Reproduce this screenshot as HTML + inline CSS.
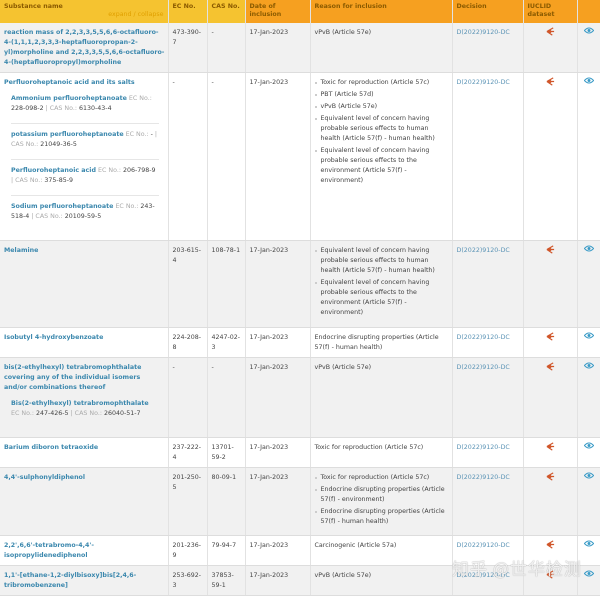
<!DOCTYPE html>
<html><head><meta charset="utf-8"><style>
*{margin:0;padding:0;box-sizing:border-box}
body{width:600px;height:591px;overflow:hidden;background:#fff;font-family:"DejaVu Sans","Liberation Sans",sans-serif;font-size:6.3px;color:#444;position:relative}
table{border-collapse:collapse;width:600px;table-layout:fixed;position:absolute;top:0;left:0}
td,th{vertical-align:top;border-right:1px solid #e2e2e2;padding:5px 3px 0 4px;line-height:10px;overflow:hidden}
th{height:23px;text-align:left;font-weight:bold;color:#8a5a00;padding:3px 4px 0;line-height:8px;background:#f5c330}
th.o{background:#f6a020}
tr.g td{background:#f1f1f1}
tr td{border-bottom:1px solid #ddd}
.l{color:#3a87ad;font-weight:bold}
.d{color:#5a93b5}
.sub{margin:6px 6px 0 7px;padding-bottom:6px;border-bottom:1px solid #e6e6e6;height:30px}
.lab{color:#aaa}
ul{list-style:none}
li{padding-left:6px;position:relative;margin-bottom:2px}
li:before{content:"";position:absolute;left:0;top:4px;width:2px;height:2px;background:#ccc}
.ic,.eye{text-align:center;padding-top:4px}
.wm{position:absolute;left:452px;top:555px;font-family:"Noto Sans CJK SC",sans-serif;font-size:17px;color:rgba(255,255,255,.85);text-shadow:0 0 1px #888;letter-spacing:1px}
</style></head><body>
<svg width="0" height="0" style="position:absolute"><defs>
<symbol id="iu" viewBox="0 0 10 10"><path d="M1 5L8 1M1 5L9 5M1 5L7 9" stroke="#d0562a" stroke-width="1.3" fill="none"/><circle cx="4" cy="5" r="2" fill="#d0562a"/></symbol>
<symbol id="ey" viewBox="0 0 12 8"><path d="M0.5 4Q6 -2 11.5 4Q6 10 0.5 4Z" fill="none" stroke="#3a9bc7" stroke-width="1.2"/><circle cx="6" cy="4" r="1.8" fill="#3a9bc7"/></symbol>
</defs></svg>
<table>
<colgroup><col style="width:168px"><col style="width:39px"><col style="width:38px"><col style="width:65px"><col style="width:142px"><col style="width:71px"><col style="width:54px"><col style="width:23px"></colgroup>
<tr><th>Substance name<br><span style="float:right;color:#e0a000;font-weight:normal;">expand / collapse</span></th><th>EC No.</th><th>CAS No.</th><th class="o">Date of inclusion</th><th class="o">Reason for inclusion</th><th class="o">Decision</th><th class="o">IUCLID dataset</th><th class="o"></th></tr>
<tr class="g" style="height:49px"><td><span class="l">reaction mass of 2,2,3,3,5,5,6,6-octafluoro-4-(1,1,1,2,3,3,3-heptafluoropropan-2-yl)morpholine and 2,2,3,3,5,5,6,6-octafluoro-4-(heptafluoropropyl)morpholine</span></td><td>473-390-7</td><td>-</td><td>17-Jan-2023</td><td>vPvB (Article 57e)</td><td class="d">D(2022)9120-DC</td><td class="ic"><svg width="9" height="9"><use href="#iu"/></svg></td><td class="eye"><svg width="10" height="7"><use href="#ey"/></svg></td></tr>
<tr style="height:168px"><td><span class="l">Perfluoroheptanoic acid and its salts</span>
<div class="sub"><span class="l">Ammonium perfluoroheptanoate</span> <span class="lab">EC No.:</span> 228-098-2 <span class="lab">| CAS No.:</span> 6130-43-4</div>
<div class="sub"><span class="l">potassium perfluoroheptanoate</span> <span class="lab">EC No.:</span> - <span class="lab">| CAS No.:</span> 21049-36-5</div>
<div class="sub"><span class="l">Perfluoroheptanoic acid</span> <span class="lab">EC No.:</span> 206-798-9 <span class="lab">| CAS No.:</span> 375-85-9</div>
<div class="sub" style="border:0;height:26px"><span class="l">Sodium perfluoroheptanoate</span> <span class="lab">EC No.:</span> 243-518-4 <span class="lab">| CAS No.:</span> 20109-59-5</div></td>
<td>-</td><td>-</td><td>17-Jan-2023</td><td><ul><li>Toxic for reproduction (Article 57c)</li><li>PBT (Article 57d)</li><li>vPvB (Article 57e)</li><li>Equivalent level of concern having probable serious effects to human health (Article 57(f) - human health)</li><li>Equivalent level of concern having probable serious effects to the environment (Article 57(f) - environment)</li></ul></td><td class="d">D(2022)9120-DC</td><td class="ic"><svg width="9" height="9"><use href="#iu"/></svg></td><td class="eye"><svg width="10" height="7"><use href="#ey"/></svg></td></tr>
<tr class="g" style="height:87px"><td><span class="l">Melamine</span></td><td>203-615-4</td><td>108-78-1</td><td>17-Jan-2023</td><td><ul><li>Equivalent level of concern having probable serious effects to human health (Article 57(f) - human health)</li><li>Equivalent level of concern having probable serious effects to the environment (Article 57(f) - environment)</li></ul></td><td class="d">D(2022)9120-DC</td><td class="ic"><svg width="9" height="9"><use href="#iu"/></svg></td><td class="eye"><svg width="10" height="7"><use href="#ey"/></svg></td></tr>
<tr style="height:30px"><td><span class="l">Isobutyl 4-hydroxybenzoate</span></td><td>224-208-8</td><td>4247-02-3</td><td>17-Jan-2023</td><td>Endocrine disrupting properties (Article 57(f) - human health)</td><td class="d">D(2022)9120-DC</td><td class="ic"><svg width="9" height="9"><use href="#iu"/></svg></td><td class="eye"><svg width="10" height="7"><use href="#ey"/></svg></td></tr>
<tr class="g" style="height:80px"><td><span class="l">bis(2-ethylhexyl) tetrabromophthalate covering any of the individual isomers and/or combinations thereof</span><div class="sub" style="border:0;height:24px"><span class="l">Bis(2-ethylhexyl) tetrabromophthalate</span><br><span class="lab">EC No.:</span> 247-426-5 <span class="lab">| CAS No.:</span> 26040-51-7</div></td><td>-</td><td>-</td><td>17-Jan-2023</td><td>vPvB (Article 57e)</td><td class="d">D(2022)9120-DC</td><td class="ic"><svg width="9" height="9"><use href="#iu"/></svg></td><td class="eye"><svg width="10" height="7"><use href="#ey"/></svg></td></tr>
<tr style="height:30px"><td><span class="l">Barium diboron tetraoxide</span></td><td>237-222-4</td><td>13701-59-2</td><td>17-Jan-2023</td><td>Toxic for reproduction (Article 57c)</td><td class="d">D(2022)9120-DC</td><td class="ic"><svg width="9" height="9"><use href="#iu"/></svg></td><td class="eye"><svg width="10" height="7"><use href="#ey"/></svg></td></tr>
<tr class="g" style="height:68px"><td><span class="l">4,4'-sulphonyldiphenol</span></td><td>201-250-5</td><td>80-09-1</td><td>17-Jan-2023</td><td><ul><li>Toxic for reproduction (Article 57c)</li><li>Endocrine disrupting properties (Article 57(f) - environment)</li><li>Endocrine disrupting properties (Article 57(f) - human health)</li></ul></td><td class="d">D(2022)9120-DC</td><td class="ic"><svg width="9" height="9"><use href="#iu"/></svg></td><td class="eye"><svg width="10" height="7"><use href="#ey"/></svg></td></tr>
<tr style="height:30px"><td><span class="l">2,2',6,6'-tetrabromo-4,4'-isopropylidenediphenol</span></td><td>201-236-9</td><td>79-94-7</td><td>17-Jan-2023</td><td>Carcinogenic (Article 57a)</td><td class="d">D(2022)9120-DC</td><td class="ic"><svg width="9" height="9"><use href="#iu"/></svg></td><td class="eye"><svg width="10" height="7"><use href="#ey"/></svg></td></tr>
<tr class="g" style="height:30px"><td><span class="l">1,1'-[ethane-1,2-diylbisoxy]bis[2,4,6-tribromobenzene]</span></td><td>253-692-3</td><td>37853-59-1</td><td>17-Jan-2023</td><td>vPvB (Article 57e)</td><td class="d">D(2022)9120-DC</td><td class="ic"><svg width="9" height="9"><use href="#iu"/></svg></td><td class="eye"><svg width="10" height="7"><use href="#ey"/></svg></td></tr>
</table>
<div class="wm">知乎 @世华检测</div>
</body></html>
